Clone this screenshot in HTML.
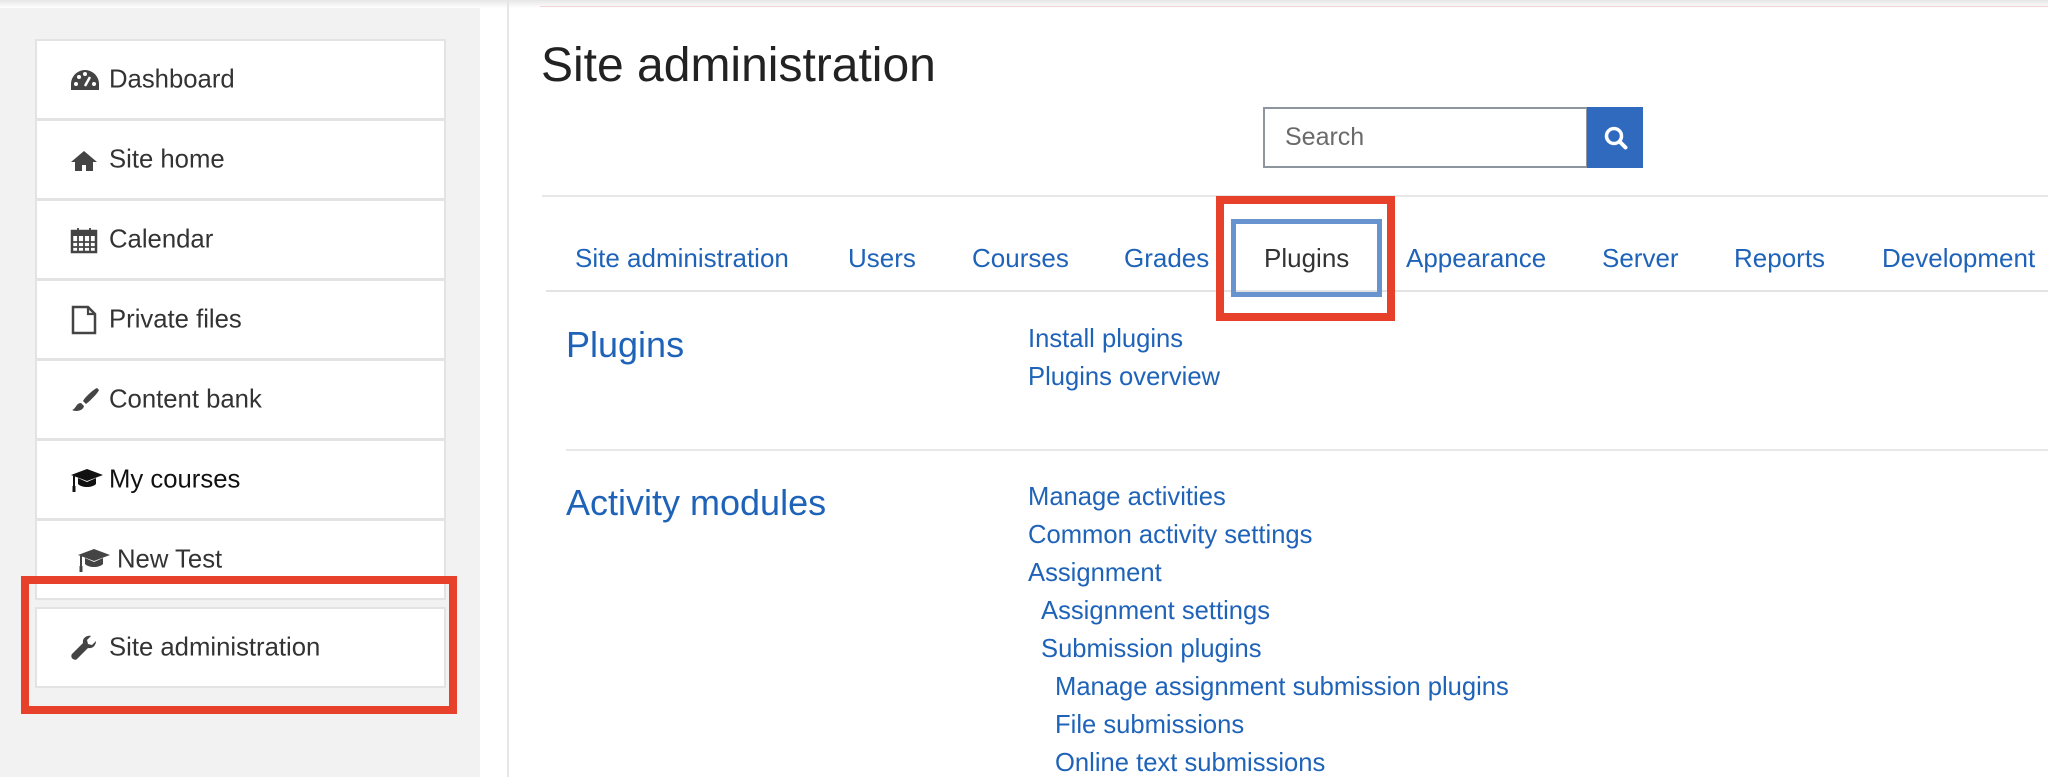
<!DOCTYPE html>
<html><head><meta charset="utf-8"><style>
*{margin:0;padding:0;box-sizing:border-box}
body{width:2048px;height:777px;position:relative;overflow:hidden;background:#fff;font-family:"Liberation Sans",sans-serif;}
.abs{position:absolute;white-space:nowrap}
.side{position:absolute;left:0;top:0;width:480px;height:777px;background:#f2f2f2}
.item{position:absolute;left:35px;width:411px;height:81px;background:#fff;border:2px solid #e3e3e3;font-size:25.7px;color:#333;}
.item span{position:absolute;left:72px;top:50%;transform:translateY(-50%)}
.item svg{position:absolute;left:33px;top:50%;transform:translateY(-50%)}
.tab{position:absolute;top:243px;font-size:26px;color:#1f63b9}
.lk{position:absolute;font-size:25.6px;color:#1f63b9}
</style></head><body>
<div class="side"></div>
<div class="abs" style="left:0;top:0;width:2048px;height:8px;background:linear-gradient(#e6e6e6,#fff)"></div>
<div class="abs" style="left:507px;top:0;width:2px;height:777px;background:#e6e6e6"></div>
<div class="abs" style="left:540px;top:6px;width:1508px;height:1px;background:#f1d4d4"></div>

<div class="item" style="top:39px"><svg width="30" height="24" viewBox="0 0 30 24"><path d="M15 2A14 14 0 0 0 1 16v6h28v-6A14 14 0 0 0 15 2z" fill="#444"/><circle cx="6" cy="16" r="2" fill="#fff"/><circle cx="9" cy="9" r="2" fill="#fff"/><circle cx="15" cy="6" r="2" fill="#fff"/><circle cx="24" cy="16" r="2" fill="#fff"/><path d="M15 18l5-9" stroke="#fff" stroke-width="2.5"/></svg><span>Dashboard</span></div>
<div class="item" style="top:119px"><svg width="28" height="24" viewBox="0 0 28 24"><path d="M14 3L1 14h4v9h7v-6h4v6h7v-9h4z" fill="#444"/></svg><span>Site home</span></div>
<div class="item" style="top:199px"><svg width="28" height="28" viewBox="0 0 28 28"><rect x="2" y="5" width="24" height="21" fill="none" stroke="#444" stroke-width="2.5"/><rect x="2" y="5" width="24" height="5" fill="#444"/><path d="M8 2v6M20 2v6M2 16h24M2 21h24M8 10v16M14 10v16M20 10v16" stroke="#444" stroke-width="1.8"/></svg><span>Calendar</span></div>
<div class="item" style="top:279px"><svg width="28" height="30" viewBox="0 0 28 30"><path d="M3 2h15l7 7v19H3z" fill="none" stroke="#444" stroke-width="2.5"/><path d="M18 2v7h7" fill="none" stroke="#444" stroke-width="2.2"/></svg><span>Private files</span></div>
<div class="item" style="top:359px"><svg width="30" height="28" viewBox="0 0 30 28"><path d="M27 2c-3 1-12 9-14 13l3 3c4-3 12-11 13-14z" fill="#444"/><path d="M11 17c-5 0-5 6-9 7 4 2 11 1 12-4z" fill="#444"/></svg><span>Content bank</span></div>
<div class="item" style="top:439px;color:#111"><svg width="34" height="26" viewBox="0 0 34 26"><path d="M17 2L1 8l16 6 16-6z" fill="#111"/><path d="M8 11v6c4 4 14 4 18 0v-6l-9 4z" fill="#111"/><path d="M4 9v12" stroke="#111" stroke-width="2"/><rect x="2.5" y="19" width="3" height="6" fill="#111"/></svg><span>My courses</span></div>
<div class="item" style="top:519px"><svg width="34" height="26" viewBox="0 0 34 26" style="left:40px"><path d="M17 2L1 8l16 6 16-6z" fill="#444"/><path d="M8 11v6c4 4 14 4 18 0v-6l-9 4z" fill="#444"/><path d="M4 9v12" stroke="#444" stroke-width="2"/><rect x="2.5" y="19" width="3" height="6" fill="#444"/></svg><span style="left:80px">New Test</span></div>
<div class="item" style="top:607px"><svg width="28" height="28" viewBox="0 0 28 28"><path d="M26 7l-4 4-4-1-1-4 4-4c-4-1-9 2-8 7L2 20c-1 1-1 4 1 5s3 1 4 0l11-11c5 1 8-3 8-7z" fill="#444"/></svg><span>Site administration</span></div>
<div class="abs" style="left:21px;top:576px;width:436px;height:138px;border:8px solid #e8412b"></div>

<div class="abs" style="left:541px;top:38px;font-size:48px;color:#222">Site administration</div>
<div class="abs" style="left:1263px;top:107px;width:325px;height:61px;border:2px solid #8f959e;"></div>
<div class="abs" style="left:1285px;top:123px;font-size:25px;color:#6a6a6a">Search</div>
<div class="abs" style="left:1587px;top:107px;width:56px;height:61px;background:#2f6abf"></div>
<svg class="abs" style="left:1603px;top:125px" width="26" height="26" viewBox="0 0 26 26"><circle cx="11" cy="11" r="7.5" fill="none" stroke="#fff" stroke-width="3.5"/><path d="M16.5 16.5l6 6" stroke="#fff" stroke-width="4" stroke-linecap="round"/></svg>

<div class="abs" style="left:542px;top:195px;width:1506px;height:2px;background:#e8e8e8"></div>
<div class="tab" style="left:575px">Site administration</div>
<div class="tab" style="left:848px">Users</div>
<div class="tab" style="left:972px">Courses</div>
<div class="tab" style="left:1124px">Grades</div>
<div class="tab" style="left:1264px;color:#333">Plugins</div>
<div class="tab" style="left:1406px">Appearance</div>
<div class="tab" style="left:1602px">Server</div>
<div class="tab" style="left:1734px">Reports</div>
<div class="tab" style="left:1882px">Development</div>
<div class="abs" style="left:546px;top:290px;width:1502px;height:2px;background:#e3e3e3"></div>
<div class="abs" style="left:1231px;top:219px;width:151px;height:78px;border:5px solid #6793cf"></div>
<div class="abs" style="left:1216px;top:196px;width:179px;height:125px;border:8px solid #e8412b"></div>

<div class="abs" style="left:566px;top:324px;font-size:36px;color:#1f63b9">Plugins</div>
<div class="lk" style="left:1028px;top:325px">Install plugins</div>
<div class="lk" style="left:1028px;top:363px">Plugins overview</div>
<div class="abs" style="left:566px;top:449px;width:1482px;height:2px;background:#e8e8e8"></div>
<div class="abs" style="left:566px;top:482px;font-size:36px;color:#1f63b9">Activity modules</div>
<div class="lk" style="left:1028px;top:483px">Manage activities</div>
<div class="lk" style="left:1028px;top:521px">Common activity settings</div>
<div class="lk" style="left:1028px;top:559px">Assignment</div>
<div class="lk" style="left:1041px;top:597px">Assignment settings</div>
<div class="lk" style="left:1041px;top:635px">Submission plugins</div>
<div class="lk" style="left:1055px;top:673px">Manage assignment submission plugins</div>
<div class="lk" style="left:1055px;top:711px">File submissions</div>
<div class="lk" style="left:1055px;top:749px">Online text submissions</div>
</body></html>
